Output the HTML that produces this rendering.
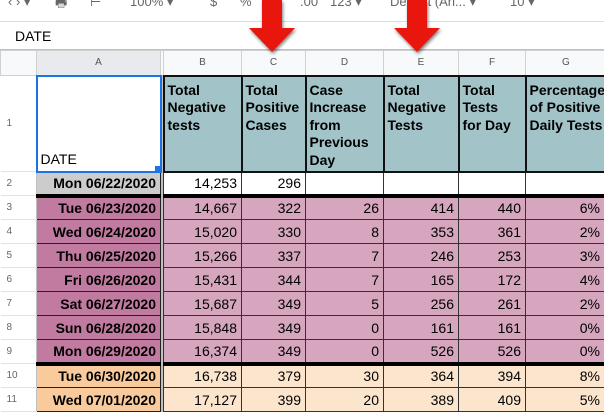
<!DOCTYPE html>
<html><head><style>
*{margin:0;padding:0;box-sizing:border-box}
body{width:604px;height:412px;overflow:hidden;background:#fff;font-family:"Liberation Sans",Arial,sans-serif;position:relative}
.tb{position:absolute;left:0;top:0;width:604px;height:22px;background:#fff;border-bottom:1px solid #dadce0;color:#666;font-size:13px}
.tb span{position:absolute;top:-6px}
.fb{position:absolute;left:0;top:22px;width:604px;height:28px;border-bottom:1px solid #c0c0c0;font-size:14px}
.fb div{position:absolute;left:15px;top:6px}
table{position:absolute;left:0;top:50px;border-collapse:collapse;table-layout:fixed;width:610px}
td{font-size:14px;padding:0 4px;text-align:right;border:1px solid #333;height:24px;line-height:20px;white-space:nowrap;overflow:hidden}
td.rh{background:#fff;color:#666;font-size:10px;text-align:left;padding-left:6px;border:none;border-right:1px solid #c0c0c0;border-bottom:1px solid #e2e2e2}
tr.ch td{background:#f8f9fa;color:#555;text-align:center;font-size:10px;border:1px solid #d0d0d0;height:25px}
tr.ch td.sel{background:#e8eaed}
td.fz{width:3px;padding:0;background:#c0c0c0;border:none}
tr.h td.c{background:#a2c4c9;font-weight:bold;text-align:left;vertical-align:top;white-space:normal;line-height:17.5px;padding:5px 3px 0;border:2px solid #111;height:96px;font-size:14px}
td.a{font-weight:bold;border:1px solid #222}
tr.p td.a{background:#c27ba0}
tr.p td.d{background:#d5a6bd}
tr.o td.a{background:#f9cb9c}
tr.o td.d{background:#fce5cd}
.thick td.d,.thick td.a{border-top:4px solid #000}
</style></head><body>
<div class="tb"><span style="left:8px">‹ › ▾</span><span style="left:55px">🖶</span><span style="left:90px">⊢</span><span style="left:130px">100%  ▾</span><span style="left:210px">$</span><span style="left:240px">%</span><span style="left:300px">.00</span><span style="left:330px">123 ▾</span><span style="left:390px">Default (Ari... ▾</span><span style="left:510px">10 ▾</span></div>
<div class="fb"><div>DATE</div></div>
<table>
<colgroup><col style="width:36px"><col style="width:124px"><col style="width:3px"><col style="width:78px"><col style="width:64px"><col style="width:78px"><col style="width:75px"><col style="width:67px"><col style="width:85px"></colgroup>
<tr class="ch"><td style="background:#f8f9fa"></td><td class="sel">A</td><td class="fz"></td><td>B</td><td>C</td><td>D</td><td>E</td><td>F</td><td style="text-align:left;padding-left:36px">G</td></tr>
<tr class="h"><td class="rh">1</td><td style="border:2px solid #1a73e8;text-align:left;vertical-align:bottom;padding:0 3px 2px;font-size:14px;background:#fff">DATE</td><td class="fz"></td>
<td class="c">Total Negative tests</td><td class="c">Total Positive Cases</td><td class="c">Case Increase from Previous Day</td><td class="c">Total Negative Tests</td><td class="c">Total<br>Tests<br>for Day</td><td class="c" style="white-space:nowrap">Percentage<br>of Positive<br>Daily Tests</td></tr>
<tr><td class="rh">2</td><td class="a" style="background:#ccc">Mon 06/22/2020</td><td class="fz"></td><td style="border-color:#ccc #333">14,253</td><td>296</td><td></td><td></td><td></td><td></td></tr>
<tr class="p thick"><td class="rh">3</td><td class="a">Tue 06/23/2020</td><td class="fz"></td><td class="d">14,667</td><td class="d">322</td><td class="d">26</td><td class="d">414</td><td class="d">440</td><td class="d" style="padding-right:10px">6%</td></tr>
<tr class="p"><td class="rh">4</td><td class="a">Wed 06/24/2020</td><td class="fz"></td><td class="d">15,020</td><td class="d">330</td><td class="d">8</td><td class="d">353</td><td class="d">361</td><td class="d" style="padding-right:10px">2%</td></tr>
<tr class="p"><td class="rh">5</td><td class="a">Thu 06/25/2020</td><td class="fz"></td><td class="d">15,266</td><td class="d">337</td><td class="d">7</td><td class="d">246</td><td class="d">253</td><td class="d" style="padding-right:10px">3%</td></tr>
<tr class="p"><td class="rh">6</td><td class="a">Fri 06/26/2020</td><td class="fz"></td><td class="d">15,431</td><td class="d">344</td><td class="d">7</td><td class="d">165</td><td class="d">172</td><td class="d" style="padding-right:10px">4%</td></tr>
<tr class="p"><td class="rh">7</td><td class="a">Sat 06/27/2020</td><td class="fz"></td><td class="d">15,687</td><td class="d">349</td><td class="d">5</td><td class="d">256</td><td class="d">261</td><td class="d" style="padding-right:10px">2%</td></tr>
<tr class="p"><td class="rh">8</td><td class="a">Sun 06/28/2020</td><td class="fz"></td><td class="d">15,848</td><td class="d">349</td><td class="d">0</td><td class="d">161</td><td class="d">161</td><td class="d" style="padding-right:10px">0%</td></tr>
<tr class="p"><td class="rh">9</td><td class="a">Mon 06/29/2020</td><td class="fz"></td><td class="d">16,374</td><td class="d">349</td><td class="d">0</td><td class="d">526</td><td class="d">526</td><td class="d" style="padding-right:10px">0%</td></tr>
<tr class="o thick"><td class="rh">10</td><td class="a">Tue 06/30/2020</td><td class="fz"></td><td class="d">16,738</td><td class="d">379</td><td class="d">30</td><td class="d">364</td><td class="d">394</td><td class="d" style="padding-right:10px">8%</td></tr>
<tr class="o"><td class="rh">11</td><td class="a">Wed 07/01/2020</td><td class="fz"></td><td class="d">17,127</td><td class="d">399</td><td class="d">20</td><td class="d">389</td><td class="d">409</td><td class="d" style="padding-right:10px">5%</td></tr>
</table>
<div style="position:absolute;left:155px;top:166px;width:6px;height:6px;background:#1a73e8"></div>
<svg style="position:absolute;left:0;top:0" width="604" height="60">
<defs><filter id="s"><feDropShadow dx="1" dy="2" stdDeviation="1.5" flood-opacity="0.5"/></filter></defs>
<path d="M262 0 H282 V28 H295 L272 52 L249 28 H262 Z" fill="#e8150f" filter="url(#s)"/>
<path d="M407 0 H427 V28 H440 L417 52 L394 28 H407 Z" fill="#e8150f" filter="url(#s)"/>
</svg>
</body></html>
